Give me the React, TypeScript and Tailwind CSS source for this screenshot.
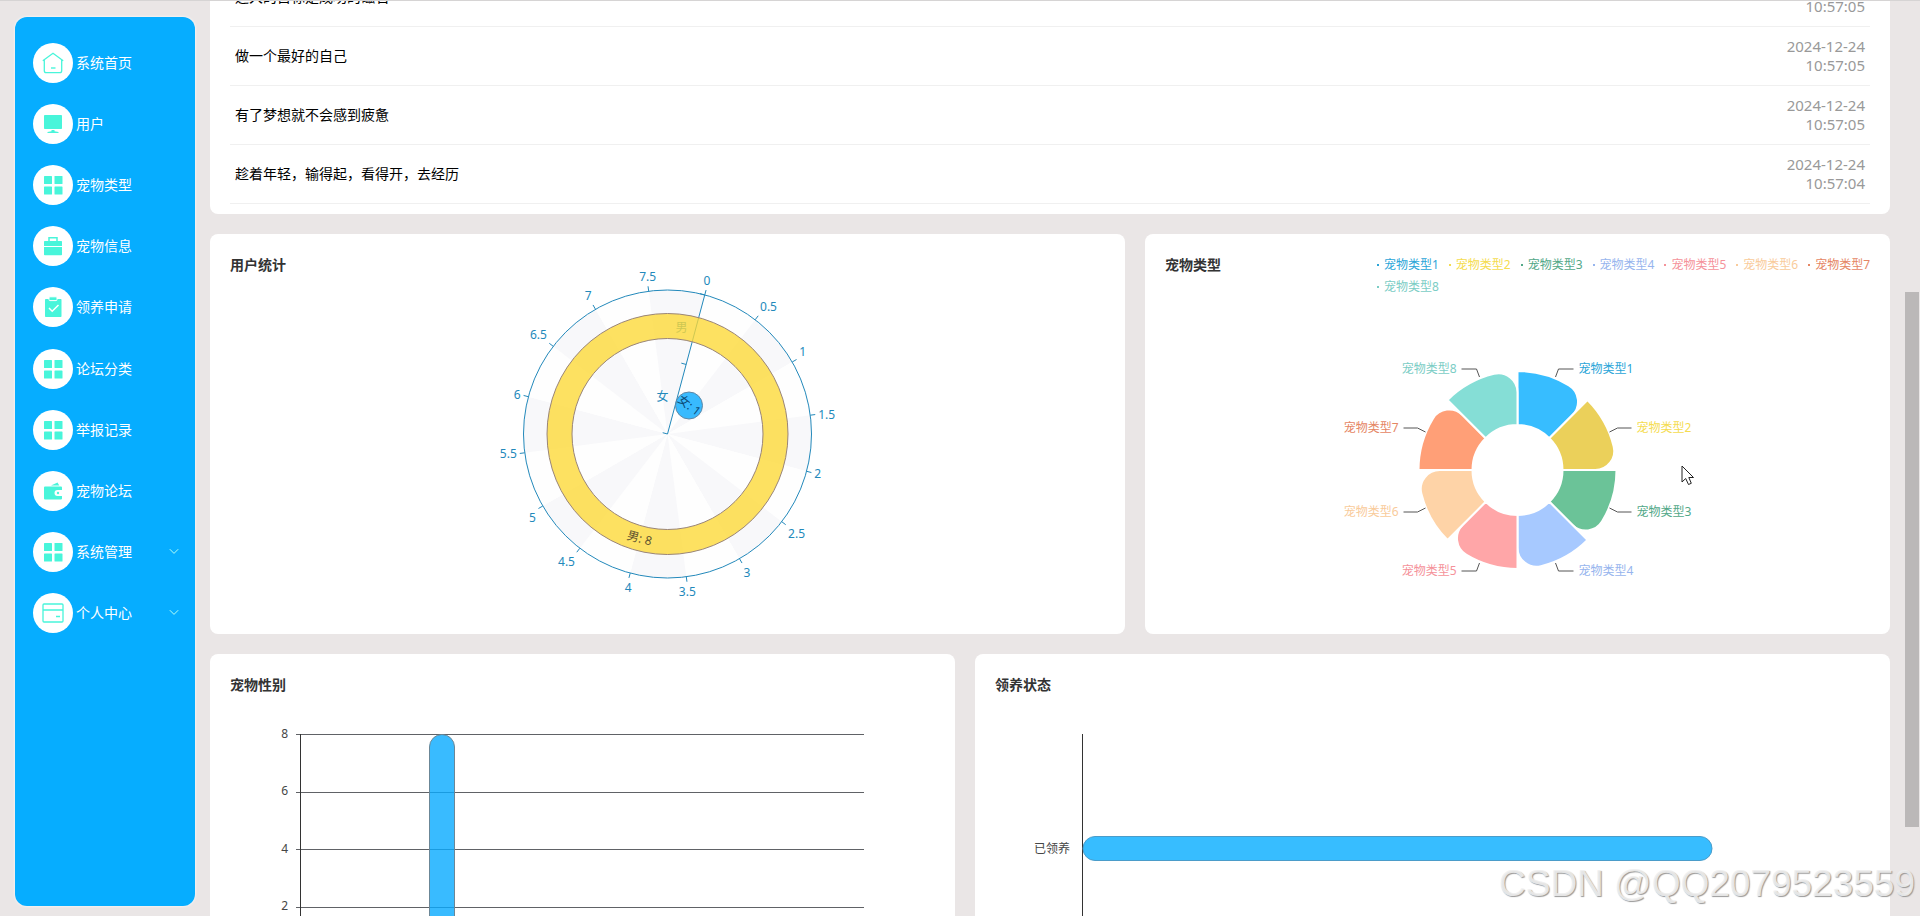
import React from 'react';

const CYAN = '#48f5da';

type IconName = 'home' | 'screen' | 'grid' | 'case' | 'clipboard' | 'wallet' | 'card';

function MenuIcon({ name }: { name: IconName }) {
    return (
        <svg viewBox="0 0 22 22" className="size-[22px]" fill={CYAN} aria-hidden="true">
            {name === 'home' && (
                <>
                    <path d="M.8 8.800 11 1.300l10.200 7.500M2.300 7.800v11q0 1.900 1.900 1.900h13.600q1.900 0 1.900-1.900v-11" fill="none" stroke={CYAN} strokeWidth="1.300" />
                    <path d="M9 16h4.500" stroke={CYAN} strokeWidth="1.400" />
                </>
            )}
            {name === 'screen' && (
                <>
                    <rect x="2" y="2" width="18" height="14" rx=".8" />
                    <path d="M9.500 17h3v1.200l4 .8v1h-11v-1l4-.8z" />
                </>
            )}
            {name === 'grid' && (
                <>
                    <rect x="2" y="2" width="8" height="8" rx=".6" />
                    <rect x="12.500" y="2" width="8" height="8" rx=".6" />
                    <rect x="2" y="12.500" width="8" height="8" rx=".6" />
                    <rect x="12.500" y="12.500" width="8" height="8" rx=".6" />
                </>
            )}
            {name === 'case' && (
                <>
                    <path d="M7 6V2.700h8V6" fill="none" stroke={CYAN} strokeWidth="1.500" />
                    <rect x="2" y="6" width="18" height="5" rx=".6" />
                    <path d="M2 12h18v7.500q0 .8-.8.8H2.800q-.8 0-.8-.8z" />
                </>
            )}
            {name === 'clipboard' && (
                <>
                    <rect x="3" y="3" width="16.500" height="18" rx=".8" />
                    <rect x="7" y=".8" width="8" height="3.800" rx="1" stroke="#fff" />
                    <path d="m7 12 3.200 3.200L16.500 9" fill="none" stroke="#fff" strokeWidth="1.500" />
                </>
            )}
            {name === 'wallet' && (
                <>
                    <path d="m9 5.500 6.500-3 1.800 3z" />
                    <path d="M3 6.500h16q1 0 1 1V10h-4.500a3 3 0 0 0 0 6H20v2.500q0 1-1 1H3q-1 0-1-1v-11q0-1 1-1z" />
                    <circle cx="16" cy="13" r="1.200" />
                </>
            )}
            {name === 'card' && (
                <>
                    <rect x="1" y="2" width="20" height="18" rx="1" fill="none" stroke={CYAN} strokeWidth="1.300" />
                    <path d="M1 8h20M14 14.500h4" stroke={CYAN} strokeWidth="1.300" />
                </>
            )}
        </svg>
    );
}

const menu: { label: string; icon: IconName; children?: boolean }[] = [
    { label: '系统首页', icon: 'home' },
    { label: '用户', icon: 'screen' },
    { label: '宠物类型', icon: 'grid' },
    { label: '宠物信息', icon: 'case' },
    { label: '领养申请', icon: 'clipboard' },
    { label: '论坛分类', icon: 'grid' },
    { label: '举报记录', icon: 'grid' },
    { label: '宠物论坛', icon: 'wallet' },
    { label: '系统管理', icon: 'grid', children: true },
    { label: '个人中心', icon: 'card', children: true },
];

const notices = [
    { title: '远大的目标是成功的磁石', date: '2024-12-24', time: '10:57:05' },
    { title: '做一个最好的自己', date: '2024-12-24', time: '10:57:05' },
    { title: '有了梦想就不会感到疲惫', date: '2024-12-24', time: '10:57:05' },
    { title: '趁着年轻，输得起，看得开，去经历', date: '2024-12-24', time: '10:57:04' },
];

const petTypes = [
    { name: '宠物类型1', fill: '#37bdff', text: '#2ba5d8' },
    { name: '宠物类型2', fill: '#ebd05a', text: '#f5dc50' },
    { name: '宠物类型3', fill: '#6bc398', text: '#52a888' },
    { name: '宠物类型4', fill: '#a7c9ff', text: '#97b5ee' },
    { name: '宠物类型5', fill: '#ffa6a8', text: '#f5929a' },
    { name: '宠物类型6', fill: '#fed3a7', text: '#f9cb9b' },
    { name: '宠物类型7', fill: '#ff9f77', text: '#e58664' },
    { name: '宠物类型8', fill: '#85ded6', text: '#7bcdc5' },
];

// angle in degrees, clockwise from twelve o'clock
const polar = (r: number, deg: number): [number, number] => {
    const a = (deg * Math.PI) / 180;
    return [r * Math.sin(a), -r * Math.cos(a)];
};
const pt = (r: number, deg: number) => polar(r, deg).map(v => v.toFixed(2)).join(' ');

function Card({ title, legend, children }: { title: string; legend?: React.ReactNode; children: React.ReactNode }) {
    return (
        <section className="h-[400px] min-w-0 rounded-lg bg-white p-5">
            <div className="flex h-5 items-start justify-between">
                <h2 className="text-sm leading-[22px] font-bold text-[#333]">{title}</h2>
                {legend}
            </div>
            {children}
        </section>
    );
}

function UserChart() {
    const ticks = Array.from({ length: 16 }, (_, i) => ({ value: i / 2, deg: 15 + i * 22.5 }));
    return (
        <svg viewBox="-437 -180 874 360" className="-mt-5 h-[360px] w-full overflow-visible" fontSize="12">
            {ticks.map((t, i) => (
                <path
                    key={t.value}
                    d={`M0 0L${pt(144, t.deg)}A144 144 0 0 1 ${pt(144, t.deg + 22.5)}Z`}
                    fill={i % 2 ? '#f8f8fa' : '#fefefe'}
                />
            ))}
            <g fill="none" stroke="#2389bb">
                <circle r="144" />
                {ticks.map(t => <path key={t.value} d={`M${pt(144, t.deg)}L${pt(149, t.deg)}`} />)}
                <path d={`M0 0L${pt(144, 15)}`} />
                {[0, 72, 144].map(r => {
                    const [x, y] = polar(r, 15);
                    return <path key={r} d={`M${x} ${y}l-4.800 -1.300`} />;
                })}
            </g>
            <g fill="#2389bb" dominantBaseline="central">
                {ticks.map(t => {
                    const [x, y] = polar(152, t.deg);
                    const side = x / 152;
                    const anchor = Math.abs(side) < 0.3 ? 'middle' : side > 0 ? 'start' : 'end';
                    const shift = Math.abs(y / 152) < 0.3 ? 0 : y > 0 ? 7 : -7;
                    return <text key={t.value} x={x} y={y + shift} textAnchor={anchor}>{t.value}</text>;
                })}
                <text x="-5" y="-38" textAnchor="middle">女</text>
                <text x="14" y="-107" textAnchor="middle">男</text>
            </g>
            <circle r="108" fill="none" stroke="#fdd835" strokeOpacity=".78" strokeWidth="25" />
            <circle r="120.500" fill="none" stroke="#9a8578" />
            <circle r="95.500" fill="none" stroke="#9a8578" />
            <circle cx="21.500" cy="-28.500" r="13.500" fill="#08aaff" fillOpacity=".8" stroke="#5f87a5" />
            <g textAnchor="middle" dominantBaseline="central">
                <text transform="translate(22 -29) rotate(37.500)" fill="#0c4a76">女: 1</text>
                <text transform="translate(-28 104) rotate(15)" fill="#5f5430">男: 8</text>
            </g>
        </svg>
    );
}

function PetTypeChart() {
    const outer = 99;
    const inner = 45;
    const corner = 19;
    const tilt = (Math.asin(corner / (outer - corner)) * 180) / Math.PI;
    const side = Math.sqrt((outer - corner) ** 2 - corner ** 2);
    return (
        <svg viewBox="-352 -196 704 340" className="h-[340px] w-full overflow-visible" fontSize="12">
            {petTypes.map((p, i) => {
                const start = i * 45;
                const end = start + 45;
                const right = i < 4;
                const near = i % 4 === 0 || i % 4 === 3;
                const sx = right ? 1 : -1;
                const sy = i < 2 || i > 5 ? -1 : 1;
                const line = near ? [[38, 93], [41, 101], [56, 101]] : [[92, 38], [100, 42], [114, 42]];
                return (
                    <g key={p.name}>
                        <path
                            d={`M${pt(inner, start)}L${pt(outer, start)}A${outer} ${outer} 0 0 1 ${pt(outer, end - tilt)}A${corner} ${corner} 0 0 1 ${pt(side, end)}L${pt(inner, end)}A${inner} ${inner} 0 0 0 ${pt(inner, start)}Z`}
                            fill={p.fill}
                            stroke="#fff"
                            strokeWidth="2"
                        />
                        <polyline points={line.map(([x, y]) => `${x * sx},${y * sy}`).join(' ')} fill="none" stroke="#555" />
                        <text
                            x={(near ? 61 : 119) * sx}
                            y={line[2][1] * sy - 1}
                            fill={p.text}
                            textAnchor={right ? 'start' : 'end'}
                            dominantBaseline="central"
                        >
                            {p.name}
                        </text>
                    </g>
                );
            })}
        </svg>
    );
}

function GenderChart() {
    return (
        <svg viewBox="0 0 705 320" className="h-[320px] w-full" fontSize="12">
            <g stroke="#606266" shapeRendering="crispEdges">
                {[0, 2, 4, 6, 8].map(v => <path key={v} d={`M66 ${270.5 - v * 28.75}H634`} />)}
                <path d="M70.500 40V271" stroke="#333" />
            </g>
            <g fill="#464646" textAnchor="end" dominantBaseline="central">
                {[0, 2, 4, 6, 8].map(v => <text key={v} x="58" y={269 - v * 28.75}>{v}</text>)}
            </g>
            <path d="M199.500 270.500V53a12.500 12.500 0 0 1 25 0v217.500z" fill="#08aaff" fillOpacity=".8" stroke="#6b8797" />
        </svg>
    );
}

function AdoptChart() {
    return (
        <svg viewBox="0 0 875 320" className="h-[320px] w-full" fontSize="12">
            <path d="M87.500 40v230" stroke="#333" />
            <text x="75" y="154" fill="#464646" textAnchor="end" dominantBaseline="central">已领养</text>
            <rect x="88" y="142.500" width="629" height="24" rx="12" fill="#37bdff" stroke="#4b9cc9" />
        </svg>
    );
}

export default function App() {
    return (
        <div className="relative flex h-screen gap-[15px] overflow-hidden border-t border-[#d6d4d4] bg-[#eae6e6] pr-[30px] pl-[15px] font-['Noto_Sans','Noto_Sans_CJK_SC',sans-serif]">
            <aside className="mt-4 mb-[10px] w-[180px] shrink-0 rounded-xl bg-[#06adff] py-[15px] pr-4 pl-[18px] shadow-[0_0_3px_#fff]">
                <nav className="grid h-[612px] auto-rows-fr">
                    {menu.map(m => (
                        <a key={m.label} href="#" className="flex items-center gap-[3px] text-sm text-white">
                            <span className="flex size-10 items-center justify-center rounded-full bg-white">
                                <MenuIcon name={m.icon} />
                            </span>
                            {m.label}
                            {m.children && (
                                <svg viewBox="0 0 10 10" className="ml-auto size-[10px]" fill="none" stroke="#b8fff4" aria-hidden="true">
                                    <path d="m.8 2.200 4.200 4.200 4.200-4.200" />
                                </svg>
                            )}
                        </a>
                    ))}
                </nav>
            </aside>

            <main className="flex min-w-0 flex-1 flex-col gap-5">
                <section className="-mt-[33px] shrink-0 rounded-b-lg bg-white px-5 pb-[10px]">
                    <ul>
                        {notices.map((n, i) => (
                            <li key={i} className="flex h-[59px] items-center justify-between border-b border-[#f0f0f0] px-[5px]">
                                <span className="text-sm text-black">{n.title}</span>
                                <span className="w-20 text-right text-[15px] leading-[19px] text-[#999]">{n.date} {n.time}</span>
                            </li>
                        ))}
                    </ul>
                </section>

                <div className="grid shrink-0 grid-cols-[915fr_745fr] gap-5">
                    <Card title="用户统计">
                        <UserChart />
                    </Card>
                    <Card
                        title="宠物类型"
                        legend={
                            <ul className="grid grid-cols-[repeat(7,auto)] gap-x-[10px] text-xs leading-[22px]">
                                {petTypes.map(p => (
                                    <li key={p.name} className="flex items-center gap-[5px] whitespace-nowrap" style={{ color: p.text }}>
                                        <span className="size-[2px] bg-current" />
                                        {p.name}
                                    </li>
                                ))}
                            </ul>
                        }
                    >
                        <PetTypeChart />
                    </Card>
                </div>

                <div className="grid shrink-0 grid-cols-[745fr_915fr] gap-5">
                    <Card title="宠物性别">
                        <GenderChart />
                    </Card>
                    <Card title="领养状态">
                        <AdoptChart />
                    </Card>
                </div>
            </main>

            <div className="absolute top-[291px] right-[1px] h-[535px] w-[14px] bg-[#bbb8b8]" />
            <svg viewBox="0 0 14 22" className="absolute top-[464px] left-[1681px] h-[22px] w-[14px]" aria-hidden="true">
                <path d="M1 1v16l3.700-3.500L7.500 19.500l2.800-1.200L7.800 12.500H12.500z" fill="#fff" stroke="#222" />
            </svg>
            <p className="absolute right-[5px] bottom-3 font-['Liberation_Sans',sans-serif] text-[37px] leading-10 text-[#f0f0f0]/90 [text-shadow:1px_1px_1px_#999]">
                CSDN @QQ2079523559
            </p>
        </div>
    );
}
